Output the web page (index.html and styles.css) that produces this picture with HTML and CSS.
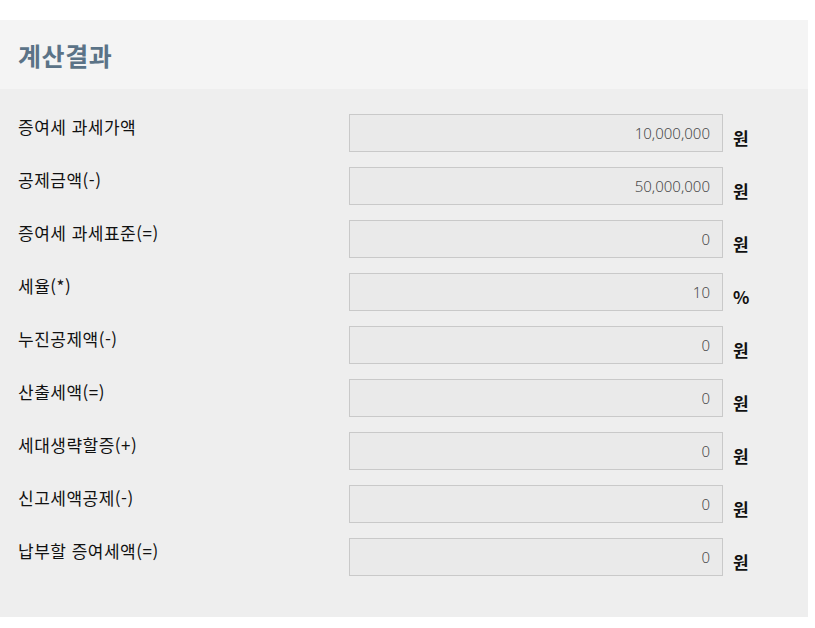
FILE: index.html
```html
<!DOCTYPE html>
<html lang="ko">
<head>
<meta charset="utf-8">
<link rel="stylesheet" href="styles.css">
</head>
<body>
<section class="panel">
  <header class="panel-head"><h2 class="title">계산결과</h2></header>
  <div class="panel-body">
    <div class="row"><span class="label">증여세 과세가액</span><div class="field">10,000,000</div><span class="unit">원</span></div>
    <div class="row"><span class="label">공제금액(-)</span><div class="field">50,000,000</div><span class="unit">원</span></div>
    <div class="row"><span class="label">증여세 과세표준(=)</span><div class="field">0</div><span class="unit">원</span></div>
    <div class="row"><span class="label">세율(*)</span><div class="field">10</div><span class="unit">%</span></div>
    <div class="row"><span class="label">누진공제액(-)</span><div class="field">0</div><span class="unit">원</span></div>
    <div class="row"><span class="label">산출세액(=)</span><div class="field">0</div><span class="unit">원</span></div>
    <div class="row"><span class="label">세대생략할증(+)</span><div class="field">0</div><span class="unit">원</span></div>
    <div class="row"><span class="label">신고세액공제(-)</span><div class="field">0</div><span class="unit">원</span></div>
    <div class="row"><span class="label">납부할 증여세액(=)</span><div class="field">0</div><span class="unit">원</span></div>
  </div>
</section>
</body>
</html>
```
FILE: styles.css
```css
* { box-sizing: border-box; }
html, body { margin: 0; padding: 0; background: #ffffff; }
body {
  font-family: "Noto Sans CJK KR", "Noto Sans", sans-serif;
  color: #111;
  padding-top: 20px;
}
.panel {
  width: 808px;
  background: #eeeeee;
}
.panel-head {
  height: 69px;
  background: #f4f4f4;
  display: flex;
  align-items: center;
  padding-left: 18px;
}
.title {
  margin: 0;
  font-size: 25px;
  font-weight: 700;
  color: #5b7387;
  line-height: 1;
  padding-top: 2px;
  letter-spacing: 0.6px;
}
.panel-body {
  padding: 25px 0 41px 18px;
  display: flex;
  flex-direction: column;
  gap: 15px;
}
.row {
  display: flex;
  align-items: flex-start;
  height: 38px;
}
.label {
  width: 331px;
  font-size: 17px;
  line-height: 24px;
  margin-top: 1px;
  color: #111;
  letter-spacing: 0.5px;
}
.field {
  width: 374px;
  height: 38px;
  border: 1px solid #c9c9c9;
  background: #eaeaea;
  text-align: right;
  padding-right: 12px;
  font-family: "Noto Sans", "Noto Sans CJK KR", sans-serif;
  font-weight: 300;
  font-size: 15px;
  line-height: 36px;
  color: #4a4a4a;
}
.unit {
  margin-left: 10px;
  font-size: 17px;
  font-weight: 700;
  line-height: 24px;
  margin-top: 12px;
  color: #111;
}
```
